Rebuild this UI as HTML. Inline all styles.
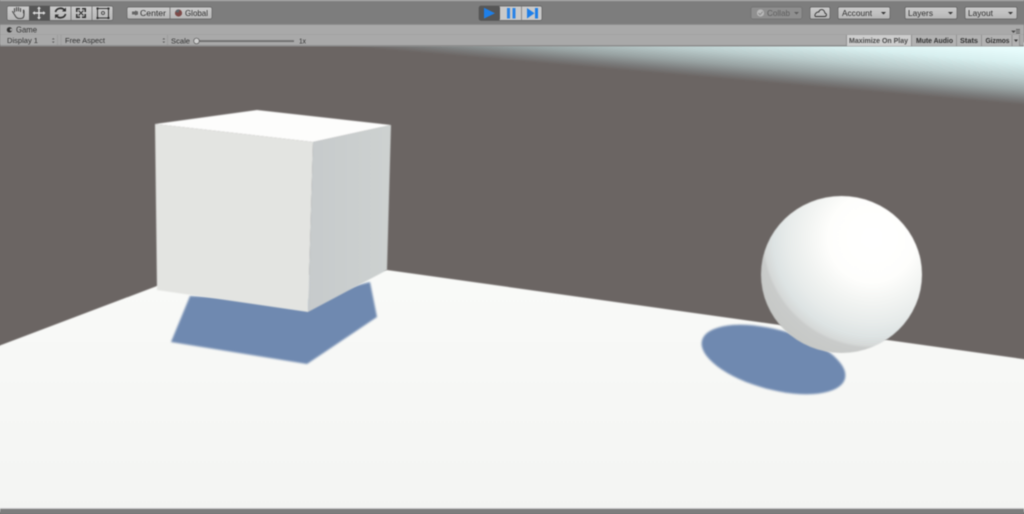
<!DOCTYPE html>
<html><head><meta charset="utf-8">
<style>
html,body{margin:0;padding:0;width:1024px;height:514px;overflow:hidden;background:#7f7f7f}
svg{position:absolute;left:0;top:0;display:block}
text{font-family:"Liberation Sans",sans-serif;font-size:8px;fill:#303030}
.ui{filter:blur(.55px)}
.sc{filter:blur(.7px)}
.sb{filter:blur(1.1px)}
</style></head><body>
<svg width="1024" height="514" viewBox="0 0 1024 514" xmlns="http://www.w3.org/2000/svg">
<defs>
<linearGradient id="sky" gradientUnits="userSpaceOnUse" x1="1024" y1="105" x2="1029.100" y2="46">
<stop offset="0" stop-color="#6b6563"/><stop offset=".1" stop-color="#7a7b7b"/><stop offset=".25" stop-color="#98a2a2"/><stop offset=".45" stop-color="#b9caca"/><stop offset=".7" stop-color="#d8efef"/><stop offset=".9" stop-color="#e6fbfb"/><stop offset="1" stop-color="#e9fdfd"/>
</linearGradient>
<linearGradient id="btn" x1="0" y1="0" x2="0" y2="1"><stop offset="0" stop-color="#cbcbcb"/><stop offset="1" stop-color="#b6b6b6"/></linearGradient>
<radialGradient id="ball" gradientUnits="userSpaceOnUse" cx="872" cy="238" r="125">
<stop offset="0" stop-color="#ffffff"/><stop offset=".35" stop-color="#fefefc"/><stop offset=".52" stop-color="#f2f4f2"/><stop offset=".68" stop-color="#e7ebea"/><stop offset=".79" stop-color="#dde3e3"/><stop offset=".86" stop-color="#d5d8d7"/><stop offset=".88" stop-color="#c9cbca"/><stop offset="1" stop-color="#c6c8c6"/>
</radialGradient>
<linearGradient id="floor" x1="0" y1="0" x2="0" y2="1"><stop offset="0" stop-color="#f9faf8"/><stop offset="1" stop-color="#f3f4f2"/></linearGradient>
<linearGradient id="right" x1="0" y1="0" x2="1" y2="0"><stop offset="0" stop-color="#c6cacb"/><stop offset="1" stop-color="#cdd1d0"/></linearGradient>
</defs>

<g class="sc">
<rect x="-4" y="44" width="1032" height="470" fill="#6b6563"/>
<polygon points="300,42.500 1034,42.500 1034,106 300,42.500" fill="url(#sky)"/>
<polygon points="-4,347 157,286 387,270 1030,360 1030,512 -4,512" fill="url(#floor)"/>
</g>
<g class="sb">
<polygon points="190,296 171,342 307,364 377,317 370,282 300,300" fill="#6f89b0"/>
<ellipse cx="773.500" cy="359.500" rx="74" ry="30" transform="rotate(15 773.500 359.500)" fill="#6f89b0"/>
</g>
<g class="sc">
<polygon points="155,124 257,110 391,125 313,142" fill="#fdfdfc"/>
<polygon points="155,124 313,142 308,312 157,290" fill="#e3e4e1"/>
<polygon points="313,142 391,125 387,270 308,312" fill="url(#right)"/>
<ellipse cx="841.500" cy="274.500" rx="80.500" ry="78.500" fill="url(#ball)"/>
</g>

<g class="ui">
<rect x="0" y="0" width="1024" height="24" fill="#7d7d7d"/>
<rect x="0" y="0" width="1024" height="1" fill="#b5b5b5"/>
<rect x="0" y="24" width="1024" height="22" fill="#a9a9a9"/>
<rect x="0" y="24" width="1024" height="1" fill="#8f8f8f"/>
<rect x="0" y="34" width="1024" height="1" fill="#a2a2a2"/>
<rect x="0" y="45" width="1024" height="1.500" fill="#8e8e8e"/>
<rect x="0" y="509" width="1024" height="5" fill="#7d7d7d"/>
<rect x="0" y="508" width="1024" height="1" fill="#c9c9c9"/>

<!-- tools -->
<rect x="7" y="6" width="106" height="14.500" rx="2" fill="url(#btn)" stroke="#5f5f5f" stroke-width=".7"/>
<rect x="29" y="6" width="21" height="14.500" fill="#565656"/>
<g stroke="#6c6c6c" stroke-width=".8"><path d="M71 6v14.500M92 6v14.500"/></g>
<path d="M12.500 11.500l2.500 4c1 2 2 3 4 3h2c2 0 3-1.500 3-4v-4M14.500 12V8.500M16.500 11V7.500M18.500 11V7.500M20.500 11.500V8.500M23.500 13v-3" fill="none" stroke="#4a4a4a" stroke-width="1.100" stroke-linecap="round"/>
<path d="M39 7.500v11M33.500 13h11" stroke="#e0e0e0" stroke-width="1.400" fill="none"/>
<path d="M39 6.500l-2 2.300h4zM39 19.500l-2-2.300h4zM32.500 13l2.300-2v4zM45.500 13l-2.300-2v4z" fill="#e0e0e0"/>
<path d="M55.500 12a5 4.500 0 0 1 9-1.800M65.500 14a5 4.500 0 0 1-9 1.800" fill="none" stroke="#2f2f2f" stroke-width="1.700"/>
<path d="M66 7.500v4h-4zM55 18.500v-4h4z" fill="#2f2f2f"/>
<path d="M78.500 10.500l5 5M83.500 10.500l-5 5" stroke="#2f2f2f" stroke-width="1"/>
<path d="M76 8h4v1.500h-2.500v2.500H76zM86 8h-4v1.500h2.500v2.500H86zM76 18h4v-1.500h-2.500V14H76zM86 18h-4v-1.500h2.500V14H86z" fill="#2f2f2f"/>
<rect x="97.500" y="8.500" width="11" height="9.500" fill="none" stroke="#333" stroke-width="1"/>
<rect x="96.500" y="7.500" width="2" height="2" fill="#333"/><rect x="107.500" y="7.500" width="2" height="2" fill="#333"/><rect x="96.500" y="17" width="2" height="2" fill="#333"/><rect x="107.500" y="17" width="2" height="2" fill="#333"/>
<circle cx="103" cy="13" r="1.500" fill="none" stroke="#333" stroke-width=".8"/>

<!-- center/global -->
<rect x="127" y="7" width="85" height="12" rx="2" fill="url(#btn)" stroke="#5f5f5f" stroke-width=".7"/>
<path d="M170 7v12" stroke="#6c6c6c" stroke-width=".8"/>
<path d="M132 11.500h3v3h-3zM135 10.500l3 1v3l-3 1z" fill="#666"/>
<text x="140" y="16" textLength="26" lengthAdjust="spacingAndGlyphs" style="font-size:8.500px">Center</text>
<circle cx="178.500" cy="13" r="3.600" fill="#7c4a48"/><path d="M175.500 12a3.500 3.500 0 0 1 4-2.500l-1 3z" fill="#5a6a70"/>
<text x="185" y="16" textLength="23" lengthAdjust="spacingAndGlyphs" style="font-size:8.500px">Global</text>

<!-- play -->
<rect x="479" y="6" width="63" height="14.500" rx="2" fill="#c9c9c9" stroke="#5a5a5a" stroke-width=".7"/>
<rect x="479" y="6" width="21" height="14.500" rx="2" fill="#565656"/>
<path d="M521.500 6v14.500" stroke="#7a7a7a" stroke-width=".8"/>
<path d="M484 7.800l11 5.400-11 5.400z" fill="#1e7fe8"/>
<rect x="507" y="8" width="3" height="10.500" fill="#2a83e6"/><rect x="512.500" y="8" width="3" height="10.500" fill="#2a83e6"/>
<path d="M527 8l7.500 5.200-7.500 5.300z" fill="#1e7fe8"/><rect x="535" y="8" width="3" height="10.500" fill="#1e7fe8"/>

<!-- right toolbar -->
<rect x="751" y="7" width="51" height="12" rx="2" fill="#8f8f8f" stroke="#707070" stroke-width=".7"/>
<circle cx="760.500" cy="13" r="3.600" fill="#b9b9b9"/><path d="M758.500 13l1.500 1.700 2.700-3" stroke="#8a8a8a" fill="none"/>
<text x="767" y="16" textLength="23" lengthAdjust="spacingAndGlyphs" style="font-size:8.500px;fill:#5e5e5e">Collab</text>
<path d="M794 12h5l-2.500 2.500z" fill="#5e5e5e"/>
<rect x="810" y="7" width="20" height="12" rx="1.500" fill="url(#btn)" stroke="#5f5f5f" stroke-width=".7"/>
<path d="M815.500 16.500h9c2.500 0 2.500-3 .5-3.300-.5-3-2.500-4-4.200-3.500-1.300.4-1.800 1.500-2 2.300-2.600-.4-5.200 3.700-3.300 4.500z" fill="none" stroke="#333" stroke-width=".9"/>
<rect x="838" y="7" width="52" height="12" rx="1.500" fill="url(#btn)" stroke="#5f5f5f" stroke-width=".7"/>
<text x="842" y="16" textLength="30" lengthAdjust="spacingAndGlyphs" style="font-size:8.500px">Account</text>
<path d="M881 12h5l-2.500 2.500z" fill="#333"/>
<rect x="905" y="7" width="52" height="12" rx="1.500" fill="url(#btn)" stroke="#5f5f5f" stroke-width=".7"/>
<text x="908" y="16" textLength="25" lengthAdjust="spacingAndGlyphs" style="font-size:8.500px">Layers</text>
<path d="M948 12h5l-2.500 2.500z" fill="#333"/>
<rect x="965" y="7" width="52" height="12" rx="1.500" fill="url(#btn)" stroke="#5f5f5f" stroke-width=".7"/>
<text x="968" y="16" textLength="25" lengthAdjust="spacingAndGlyphs" style="font-size:8.500px">Layout</text>
<path d="M1008 12h5l-2.500 2.500z" fill="#333"/>

<!-- game tab -->
<circle cx="9.500" cy="29.800" r="2.700" fill="#333"/><circle cx="11" cy="29.800" r="1.200" fill="#a9a9a9"/>
<text x="16" y="32.500" textLength="21" lengthAdjust="spacingAndGlyphs" style="font-size:8.500px">Game</text>

<!-- game toolbar -->
<text x="7" y="43" textLength="31" lengthAdjust="spacingAndGlyphs" style="font-size:7px">Display 1</text>
<path d="M52 39.500l1.300-1.500 1.300 1.500zM52 41.500l1.300 1.500 1.300-1.500z" fill="#555"/>
<path d="M57.500 35v10M61 35v10M167.500 35v10" stroke="#9a9a9a" stroke-width=".8"/>
<text x="65" y="43" textLength="40" lengthAdjust="spacingAndGlyphs" style="font-size:7px">Free Aspect</text>
<path d="M162.500 39.500l1.300-1.500 1.300 1.500zM162.500 41.500l1.300 1.500 1.300-1.500z" fill="#555"/>
<text x="171" y="43.500" textLength="19" lengthAdjust="spacingAndGlyphs" style="font-size:7px">Scale</text>
<rect x="196" y="40.200" width="98" height="1.800" fill="#6e6e6e"/>
<circle cx="196.500" cy="41" r="2.800" fill="#cfcfcf" stroke="#555" stroke-width=".7"/>
<text x="299" y="43.500" textLength="7" lengthAdjust="spacingAndGlyphs" style="font-size:7px">1x</text>

<rect x="847" y="35" width="64" height="11" fill="#cdcdcd"/>
<rect x="912" y="35" width="107" height="11" fill="#b2b2b2"/>
<path d="M956.500 35v11M981.500 35v11M1012 35v11M1019.500 35v11M846.500 35v11M911.500 35v11" stroke="#8c8c8c" stroke-width=".8"/>
<text x="849" y="43.200" textLength="59" lengthAdjust="spacingAndGlyphs" style="font-size:7px;font-weight:bold;fill:#4a4a4a">Maximize On Play</text>
<text x="916" y="43.200" textLength="37" lengthAdjust="spacingAndGlyphs" style="font-size:7px;font-weight:bold">Mute Audio</text>
<text x="960" y="43.200" textLength="18" lengthAdjust="spacingAndGlyphs" style="font-size:7px;font-weight:bold">Stats</text>
<text x="985.500" y="43.200" textLength="24" lengthAdjust="spacingAndGlyphs" style="font-size:7px;font-weight:bold">Gizmos</text>
<path d="M1014 39.500h4l-2 2.500z" fill="#333"/>
<path d="M1012 31l1.500 1.500 1.500-1.500zM1016 29.500h4M1016 31.200h4M1016 33h4" fill="#444" stroke="#444" stroke-width=".7"/>
</g>
</svg>
</body></html>
